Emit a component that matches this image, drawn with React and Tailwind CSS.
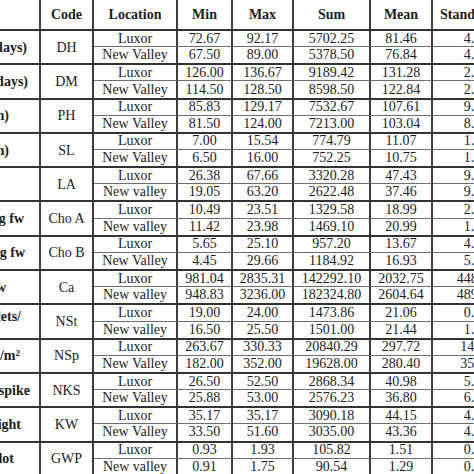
import React from "react";

const cols = "grid grid-cols-[41px_53px_84px_55px_61px_77px_62px_86px] w-[519px]";

const groups = [
  { label: "Days to heading (days)", pad: "pr-[12px]", code: "DH", rows: [["Luxor", "72.67", "92.17", "5702.25", "81.46", "4.15"], ["New Valley", "67.50", "89.00", "5378.50", "76.84", "4.38"]] },
  { label: "Days to maturity (days)", pad: "pr-[11px]", code: "DM", rows: [["Luxor", "126.00", "136.67", "9189.42", "131.28", "2.45"], ["New Valley", "114.50", "128.50", "8598.50", "122.84", "2.28"]] },
  { label: "Plant height (cm)", pad: "pr-[30px]", code: "PH", rows: [["Luxor", "85.83", "129.17", "7532.67", "107.61", "9.05"], ["New Valley", "81.50", "124.00", "7213.00", "103.04", "8.72"]] },
  { label: "Spike length (cm)", pad: "pr-[30px]", code: "SL", rows: [["Luxor", "7.00", "15.54", "774.79", "11.07", "1.74"], ["New Valley", "6.50", "16.00", "752.25", "10.75", "1.38"]] },
  { label: "", pad: "pr-[14px]", code: "LA", rows: [["Luxor", "26.38", "67.66", "3320.28", "47.43", "9.06"], ["New valley", "19.05", "63.20", "2622.48", "37.46", "9.91"]] },
  { label: "Chlorophyll A mg/g fw", pad: "pr-[15px]", code: "Cho A", rows: [["Luxor", "10.49", "23.51", "1329.58", "18.99", "2.34"], ["New valley", "11.42", "23.98", "1469.10", "20.99", "1.92"]] },
  { label: "Chlorophyll B mg/g fw", pad: "pr-[14px]", code: "Cho B", rows: [["Luxor", "5.65", "25.10", "957.20", "13.67", "4.06"], ["New Valley", "4.45", "29.66", "1184.92", "16.93", "5.92"]] },
  { label: "Carotenoids mg/g fw", pad: "pr-[33px]", code: "Ca", rows: [["Luxor", "981.04", "2835.31", "142292.10", "2032.75", "448.25"], ["New valley", "948.83", "3236.00", "182324.80", "2604.64", "489.31"]] },
  { label: "No. of spikelets/", pad: "pr-[18px]", top: true, code: "NSt", rows: [["Luxor", "19.00", "24.00", "1473.86", "21.06", "0.95"], ["New valley", "16.50", "25.50", "1501.00", "21.44", "1.93"]] },
  { label: "No. of spikes/m", sup: "2", pad: "pr-[19px]", code: "NSp", rows: [["Luxor", "263.67", "330.33", "20840.29", "297.72", "14.62"], ["New Valley", "182.00", "352.00", "19628.00", "280.40", "35.27"]] },
  { label: "No. of kernels/spike", pad: "pr-[9px]", code: "NKS", rows: [["Luxor", "26.50", "52.50", "2868.34", "40.98", "5.96"], ["New Valley", "25.88", "53.00", "2576.23", "36.80", "6.45"]] },
  { label: "1000-kernel weight", pad: "pr-[18px]", code: "KW", rows: [["Luxor", "35.17", "35.17", "3090.18", "44.15", "4.41"], ["New Valley", "33.50", "51.60", "3035.00", "43.36", "4.17"]] },
  { label: "Grain weight/plot", pad: "pr-[25px]", code: "GWP", rows: [["Luxor", "0.93", "1.93", "105.82", "1.51", "0.23"], ["New valley", "0.91", "1.75", "90.54", "1.29", "0.21"]] },
];

const Row = ({ cells, first }) =>
  cells.map((c, i) => (
    <div
      key={i}
      className={`flex items-center justify-center whitespace-nowrap leading-none ${
        i < cells.length - 1 ? "border-r-2 border-[#3d3d3d]" : ""
      } ${first ? "border-b border-b-[#6e6e6e]" : ""}`}
    >
      {c}
    </div>
  ));

export default function App() {
  return (
    <div className="w-[474px] h-[474px] overflow-hidden bg-white text-[14px] text-[#1c1c1c] font-['Liberation_Serif',serif]">
      <div className={`${cols} h-[31px] border-b-2 border-[#333] font-bold`}>
        <div className="border-r-2 border-[#3d3d3d]" />
        <div className="border-r-2 border-[#3d3d3d] flex items-center justify-center">Code</div>
        <div className="border-r-2 border-[#3d3d3d] flex items-center justify-center">Location</div>
        <div className="border-r-2 border-[#3d3d3d] flex items-center justify-center">Min</div>
        <div className="border-r-2 border-[#3d3d3d] flex items-center justify-center">Max</div>
        <div className="border-r-2 border-[#3d3d3d] flex items-center justify-center">Sum</div>
        <div className="border-r-2 border-[#3d3d3d] flex items-center justify-center">Mean</div>
        <div className="flex items-center pl-[7px] whitespace-nowrap">Standard deviation</div>
      </div>

      {groups.map((g) => (
        <div key={g.code} className={`${cols} grid-rows-2 h-[34.3px] border-b-2 border-[#333]`}>
          <div
            className={`row-span-2 border-r-2 border-[#3d3d3d] flex justify-end overflow-hidden whitespace-nowrap font-bold ${
              g.top ? "items-start pt-[1px]" : "items-center"
            } ${g.pad}`}
          >
            <span>
              {g.label}
              {g.sup && <sup className="text-[9px]">{g.sup}</sup>}
            </span>
          </div>
          <div className="row-span-2 border-r-2 border-[#3d3d3d] flex items-center justify-center whitespace-nowrap">
            {g.code}
          </div>
          <Row cells={g.rows[0]} first />
          <Row cells={g.rows[1]} />
        </div>
      ))}
    </div>
  );
}
